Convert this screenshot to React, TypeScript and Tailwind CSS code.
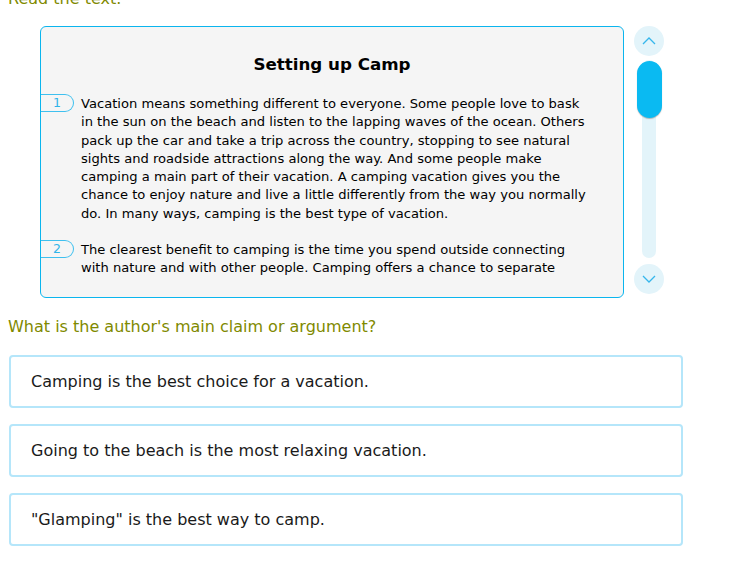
import React from 'react';

const paragraphs = [
    'Vacation means something different to everyone. Some people love to bask in the sun on the beach and listen to the lapping waves of the ocean. Others pack up the car and take a trip across the country, stopping to see natural sights and roadside attractions along the way. And some people make camping a main part of their vacation. A camping vacation gives you the chance to enjoy nature and live a little differently from the way you normally do. In many ways, camping is the best type of vacation.',
    'The clearest benefit to camping is the time you spend outside connecting with nature and with other people. Camping offers a chance to separate yourself from the busy world and enjoy the quiet of the outdoors.',
];

const answers = [
    'Camping is the best choice for a vacation.',
    'Going to the beach is the most relaxing vacation.',
    '"Glamping" is the best way to camp.',
];

const App = () => {
    return (
        <div className="w-[754px] h-[568px] overflow-hidden bg-white font-['DejaVu_Sans',sans-serif]">
            <div className="px-2 -mt-[13px]">
                <p className="text-[16px] leading-[24px] text-[#7f8a00]">Read the text.</p>

                {/* текст + скролл */}
                <div className="flex ml-[32px] mt-[15px]">
                    <div className="w-[584px] h-[272px] border border-[#0bb5ee] rounded-[6px] bg-[#f5f5f5] pb-[20px]">
                        <div className="h-full overflow-hidden">
                            <h2 className="text-center font-bold text-[16.7px] leading-[20px] text-black mt-[27px] mb-[21px]">
                                Setting up Camp
                            </h2>
                            {paragraphs.map((p, i) => (
                                <div key={i} className="flex mb-[18px]">
                                    <div className="shrink-0 w-[33px] h-[18px] mt-[-1px] border border-l-0 border-[#3fc0ef] rounded-r-full text-[12.5px] leading-[16px] text-[#2fb4e9] text-center">
                                        {i + 1}
                                    </div>
                                    <p className="ml-[7px] w-[508px] text-[13.1px] leading-[18.3px] text-black">{p}</p>
                                </div>
                            ))}
                        </div>
                    </div>

                    <div className="ml-[10px] w-[30px] flex flex-col items-center">
                        <div className="w-[30px] h-[30px] rounded-full bg-[#e3f4fa] flex items-center justify-center">
                            <svg width="14" height="8" viewBox="0 0 14 8" fill="none" stroke="#35b6ec" strokeWidth="1.3">
                                <path d="M1 7 L7 1 L13 7" />
                            </svg>
                        </div>
                        <div className="relative mt-[4px] w-[14px] h-[198px] rounded-full bg-[#e3f4fa]">
                            <div className="absolute -left-[5.5px] top-[1px] w-[25px] h-[57px] rounded-full bg-[#0abaf2] shadow-[0_1px_1px_rgba(0,0,0,0.25)]" />
                        </div>
                        <div className="mt-[6px] w-[30px] h-[30px] rounded-full bg-[#e3f4fa] flex items-center justify-center">
                            <svg width="14" height="8" viewBox="0 0 14 8" fill="none" stroke="#35b6ec" strokeWidth="1.3">
                                <path d="M1 1 L7 7 L13 1" />
                            </svg>
                        </div>
                    </div>
                </div>

                <p className="mt-[17px] text-[16px] leading-[24px] text-[#7f8a00]">
                    What is the author's main claim or argument?
                </p>

                <div className="mt-[16px] ml-px w-[674px] flex flex-col gap-[16px]">
                    {answers.map((a) => (
                        <button
                            key={a}
                            className="h-[53px] border-2 border-[#b5e6fa] rounded-[4px] bg-white text-left pl-[20px] text-[16px] text-[#1a1a1a]"
                        >
                            {a}
                        </button>
                    ))}
                </div>
            </div>
        </div>
    );
};

export default App;
